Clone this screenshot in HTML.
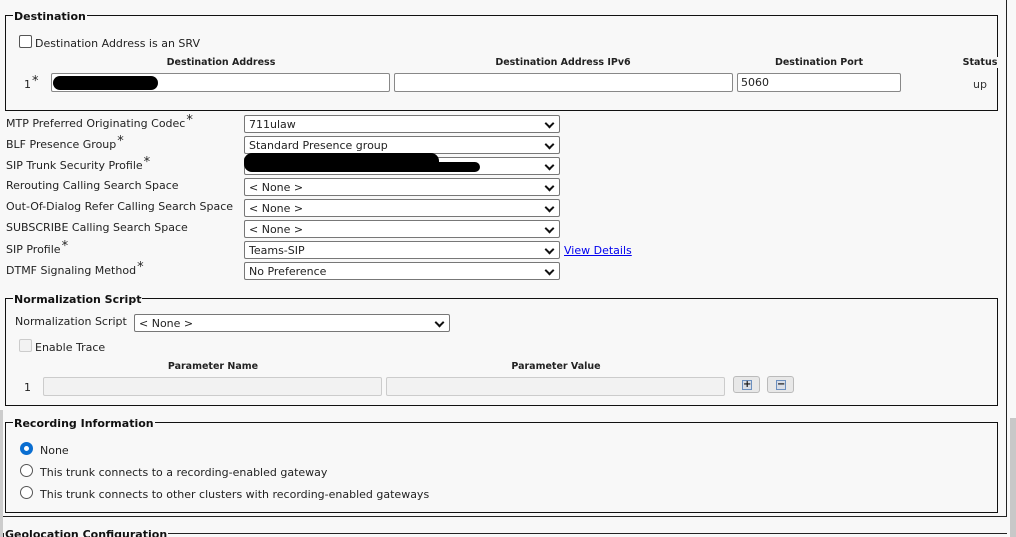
<!DOCTYPE html>
<html style="overflow:hidden;width:1016px;height:537px"><head><style>
*{margin:0;padding:0;box-sizing:border-box}
body{width:1016px;height:537px;overflow:hidden;background:#f8f8f8;font-family:"DejaVu Sans","Liberation Sans",sans-serif;font-size:11px;color:#222;position:relative}
.a{position:absolute;white-space:nowrap}
.t{margin-top:1px}
.fs{position:absolute;border:1px solid #111}
.lg{position:absolute;background:#f8f8f8;font-weight:bold;font-size:11px;padding:0 1px;line-height:13px;color:#111}
.h{position:absolute;font-weight:bold;font-size:9.5px;transform:translateX(-50%);white-space:nowrap}
.in{position:absolute;height:19px;background:#fff;border:1px solid #888;border-radius:2px;padding-left:3px;line-height:18px;font-size:11px}
.dis{background:#f2f2f2;border-color:#ccc}
.sel{position:absolute;height:18px;background:#fff;border:1px solid #777;border-radius:2px;padding-left:4px;line-height:17px;font-size:11px;width:316px}
.sel::after{content:"";position:absolute;right:6px;top:4px;width:5px;height:5px;border-right:2px solid #111;border-bottom:2px solid #111;transform:rotate(45deg)}
.lbl{position:absolute;left:6px;font-size:11px;white-space:nowrap;margin-top:1px}
.lbl sup,.a sup{font-size:13px;vertical-align:0;position:relative;top:-3px;margin-left:1px}
.cb{position:absolute;width:13px;height:13px;border:1px solid #555;border-radius:2px;background:#fff}
.rd{position:absolute;width:13px;height:13px;border:1px solid #555;border-radius:50%;background:#fff}
.btn{position:absolute;width:27px;height:17px;border:1px solid #bbb;border-radius:3px;background:#e8e8e8}
.btn i{position:absolute;left:8px;top:3px;width:10px;height:10px;border:1px solid #6b8fbf;background:#d8dde6;font-style:normal;font-weight:bold;font-size:10px;line-height:8px;text-align:center;color:#111}
</style></head><body>
<div class="a" style="left:1006px;top:0;width:1px;height:517px;background:#222"></div>
<div class="a" style="left:1010px;top:418px;width:6px;height:119px;background:#c8c8c8"></div>
<div class="a" style="left:0;top:410px;width:3px;height:127px;background:#ccc"></div>

<div class="fs" style="left:5px;top:15px;width:993px;height:96px"></div>
<div class="lg" style="left:13px;top:10px">Destination</div>
<div class="cb" style="left:19px;top:35px"></div>
<div class="a t" style="left:35px;top:36px">Destination Address is an SRV</div>
<div class="h" style="left:221px;top:57px">Destination Address</div>
<div class="h" style="left:563px;top:57px">Destination Address IPv6</div>
<div class="h" style="left:819px;top:57px">Destination Port</div>
<div class="h" style="left:980px;top:57px;background:#f8f8f8;padding:0 2px">Status</div>
<div class="a t" style="left:24px;top:76px">1<sup>*</sup></div>
<div class="in" style="left:51px;top:73px;width:339px"></div>
<div class="a" style="left:53px;top:76px;width:105px;height:14px;background:#000;border-radius:7px"></div>
<div class="in" style="left:394px;top:73px;width:339px"></div>
<div class="in" style="left:737px;top:73px;width:164px">5060</div>
<div class="a t" style="left:973px;top:77px;color:#333">up</div>

<div class="lbl" style="top:115px">MTP Preferred Originating Codec<sup>*</sup></div>
<div class="sel" style="left:244px;top:115px">711ulaw</div>
<div class="lbl" style="top:136px">BLF Presence Group<sup>*</sup></div>
<div class="sel" style="left:244px;top:136px">Standard Presence group</div>
<div class="lbl" style="top:157px">SIP Trunk Security Profile<sup>*</sup></div>
<div class="sel" style="left:244px;top:157px"></div>
<div class="a" style="left:244px;top:153px;width:195px;height:19px;background:#000;border-radius:8px"></div>
<div class="a" style="left:400px;top:162px;width:80px;height:10px;background:#000;border-radius:5px"></div>
<div class="lbl" style="top:178px">Rerouting Calling Search Space</div>
<div class="sel" style="left:244px;top:178px">&lt; None &gt;</div>
<div class="lbl" style="top:199px">Out-Of-Dialog Refer Calling Search Space</div>
<div class="sel" style="left:244px;top:199px">&lt; None &gt;</div>
<div class="lbl" style="top:220px">SUBSCRIBE Calling Search Space</div>
<div class="sel" style="left:244px;top:220px">&lt; None &gt;</div>
<div class="lbl" style="top:241px">SIP Profile<sup>*</sup></div>
<div class="sel" style="left:244px;top:241px">Teams-SIP</div>
<div class="a t" style="left:564px;top:243px;color:#0000ee;text-decoration:underline">View Details</div>
<div class="lbl" style="top:262px">DTMF Signaling Method<sup>*</sup></div>
<div class="sel" style="left:244px;top:262px">No Preference</div>

<div class="fs" style="left:5px;top:298px;width:993px;height:108px"></div>
<div class="lg" style="left:13px;top:293px">Normalization Script</div>
<div class="a t" style="left:15px;top:314px">Normalization Script</div>
<div class="sel" style="left:134px;top:314px">&lt; None &gt;</div>
<div class="cb" style="left:19px;top:339px;border-color:#ccc;background:#f2f2f2"></div>
<div class="a t" style="left:35px;top:340px">Enable Trace</div>
<div class="h" style="left:213px;top:361px">Parameter Name</div>
<div class="h" style="left:556px;top:361px">Parameter Value</div>
<div class="a t" style="left:24px;top:380px">1</div>
<div class="in dis" style="left:43px;top:377px;width:339px"></div>
<div class="in dis" style="left:386px;top:377px;width:339px"></div>
<div class="btn" style="left:733px;top:376px"><i>+</i></div>
<div class="btn" style="left:767px;top:376px"><i>−</i></div>

<div class="fs" style="left:5px;top:422px;width:993px;height:91px"></div>
<div class="lg" style="left:13px;top:417px">Recording Information</div>
<div class="rd" style="left:20px;top:442px;border:4px solid #0a6ed1"></div>
<div class="a t" style="left:40px;top:443px">None</div>
<div class="rd" style="left:20px;top:464px"></div>
<div class="a t" style="left:40px;top:465px">This trunk connects to a recording-enabled gateway</div>
<div class="rd" style="left:20px;top:486px"></div>
<div class="a t" style="left:40px;top:487px">This trunk connects to other clusters with recording-enabled gateways</div>
<div class="a" style="left:3px;top:516px;width:1004px;height:1px;background:#222"></div>

<div class="a" style="left:3px;top:533px;width:1004px;height:1px;background:#222"></div>
<div class="a" style="left:3px;top:533px;width:1px;height:4px;background:#222"></div>
<div class="lg" style="left:4px;top:528px">Geolocation Configuration</div>
</body></html>
